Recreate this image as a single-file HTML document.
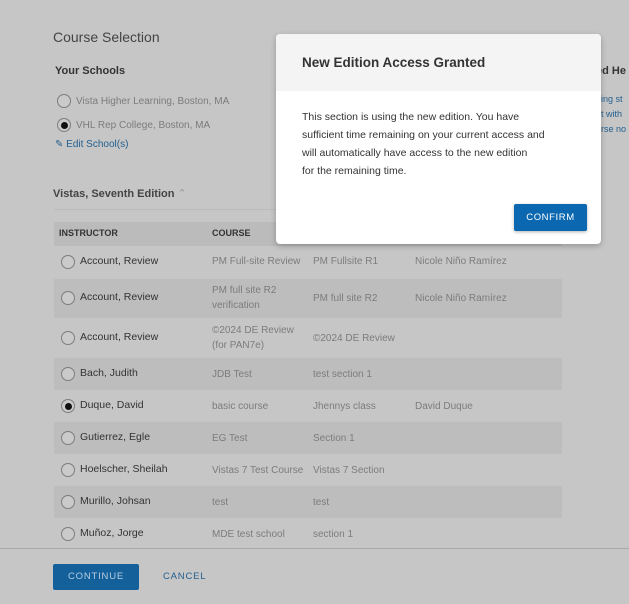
<!DOCTYPE html>
<html><head><style>
*{margin:0;padding:0;box-sizing:border-box}
body{width:629px;height:604px;background:#c6c6c6;font-family:"Liberation Sans",sans-serif;position:relative;overflow:hidden;color:#3a3a3a}
.a{position:absolute;white-space:nowrap}
.r{position:absolute;left:54px;width:508px}
.s{background:#bdbdbd}
.rad{position:absolute;width:14px;height:14px;border:1px solid #7d7d7d;border-radius:50%;background:#cacaca}
.rad.on::after{content:"";position:absolute;left:2.5px;top:2.5px;width:7px;height:7px;border-radius:50%;background:#111}
.n{font-size:10.5px;color:#333}
.g{font-size:10px;color:#7c7c7c;line-height:15px}
</style></head><body>
<div class="a" style="left:53px;top:29px;font-size:14px;color:#444">Course Selection</div>
<div class="a" style="left:55px;top:65px;font-size:11px;font-weight:bold;color:#333">Your Schools</div>
<div class="rad" style="left:57px;top:94px"></div>
<div class="a g" style="left:76px;top:94px">Vista Higher Learning, Boston, MA</div>
<div class="rad on" style="left:57px;top:118px"></div>
<div class="a g" style="left:76px;top:118px">VHL Rep College, Boston, MA</div>
<div class="a" style="left:55px;top:139px;font-size:10px;color:#245f8e">✎ Edit School(s)</div>
<div class="a" style="left:53px;top:187px;font-size:11px;font-weight:bold;color:#444">Vistas, Seventh Edition <span style="color:#999;font-weight:normal">⌃</span></div>
<div class="a" style="left:54px;top:209px;width:240px;height:1px;background:#bbb"></div>
<div class="a" style="left:596px;top:65px;font-size:11px;font-weight:bold;color:#333">ed He</div>
<div class="a" style="left:596px;top:92px;font-size:9px;line-height:15px;color:#245f8e">tting st<br>at with<br>urse no</div>

<div class="r" style="top:222px;height:24px;background:#bbb"></div>
<div class="a" style="left:59px;top:228px;font-size:9px;font-weight:bold;color:#333">INSTRUCTOR</div>
<div class="a" style="left:212px;top:228px;font-size:9px;font-weight:bold;color:#333">COURSE</div>

<div class="r s" style="top:279px;height:39px"></div>
<div class="r s" style="top:358px;height:32px"></div>
<div class="r s" style="top:422px;height:32px"></div>
<div class="r s" style="top:486px;height:32px"></div>

<div class="rad" style="left:61px;top:255px"></div><div class="a n" style="left:80px;top:255px">Account, Review</div><div class="a g" style="left:212px;top:254px">PM Full-site Review</div><div class="a g" style="left:313px;top:254px">PM Fullsite R1</div><div class="a g" style="left:415px;top:254px">Nicole Niño Ramírez</div>
<div class="rad" style="left:61px;top:291px"></div><div class="a n" style="left:80px;top:291px">Account, Review</div><div class="a g" style="left:212px;top:283px">PM full site R2<br>verification</div><div class="a g" style="left:313px;top:291px">PM full site R2</div><div class="a g" style="left:415px;top:291px">Nicole Niño Ramírez</div>
<div class="rad" style="left:61px;top:331px"></div><div class="a n" style="left:80px;top:331px">Account, Review</div><div class="a g" style="left:212px;top:323px">©2024 DE Review<br>(for PAN7e)</div><div class="a g" style="left:313px;top:331px">©2024 DE Review</div>
<div class="rad" style="left:61px;top:367px"></div><div class="a n" style="left:80px;top:367px">Bach, Judith</div><div class="a g" style="left:212px;top:367px">JDB Test</div><div class="a g" style="left:313px;top:367px">test section 1</div>
<div class="rad on" style="left:61px;top:399px"></div><div class="a n" style="left:80px;top:399px">Duque, David</div><div class="a g" style="left:212px;top:399px">basic course</div><div class="a g" style="left:313px;top:399px">Jhennys class</div><div class="a g" style="left:415px;top:399px">David Duque</div>
<div class="rad" style="left:61px;top:431px"></div><div class="a n" style="left:80px;top:431px">Gutierrez, Egle</div><div class="a g" style="left:212px;top:431px">EG Test</div><div class="a g" style="left:313px;top:431px">Section 1</div>
<div class="rad" style="left:61px;top:463px"></div><div class="a n" style="left:80px;top:463px">Hoelscher, Sheilah</div><div class="a g" style="left:212px;top:463px">Vistas 7 Test Course</div><div class="a g" style="left:313px;top:463px">Vistas 7 Section</div>
<div class="rad" style="left:61px;top:495px"></div><div class="a n" style="left:80px;top:495px">Murillo, Johsan</div><div class="a g" style="left:212px;top:495px">test</div><div class="a g" style="left:313px;top:495px">test</div>
<div class="rad" style="left:61px;top:527px"></div><div class="a n" style="left:80px;top:527px">Muñoz, Jorge</div><div class="a g" style="left:212px;top:527px">MDE test school</div><div class="a g" style="left:313px;top:527px">section 1</div>

<div class="a" style="left:0;top:548px;width:629px;height:56px;background:#c6c6c6;border-top:1px solid #aaa"></div>
<div class="a" style="left:53px;top:564px;width:86px;height:26px;background:#13609b;border-radius:2px;color:#b8cde0;font-size:9.5px;letter-spacing:0.8px;text-align:center;line-height:26px">CONTINUE</div>
<div class="a" style="left:163px;top:571px;font-size:9.5px;letter-spacing:0.8px;color:#245f8e">CANCEL</div>

<div class="a" style="left:276px;top:34px;width:325px;height:210px;background:#fff;border-radius:4px;box-shadow:0 2px 6px rgba(0,0,0,.25);overflow:hidden">
<div style="height:57px;background:#f4f4f4"></div>
<div class="a" style="left:26px;top:21px;font-size:13.5px;font-weight:bold;color:#333">New Edition Access Granted</div>
<div class="a" style="left:26px;top:74px;font-size:10.5px;line-height:18px;color:#333">This section is using the new edition. You have<br>sufficient time remaining on your current access and<br>will automatically have access to the new edition<br>for the remaining time.</div>
<div class="a" style="left:238px;top:170px;width:73px;height:27px;background:#0a67b0;border-radius:2px;color:#fff;font-size:9.5px;letter-spacing:0.6px;text-align:center;line-height:27px;box-shadow:0 1px 3px rgba(0,0,0,.3)">CONFIRM</div>
</div>
</body></html>
